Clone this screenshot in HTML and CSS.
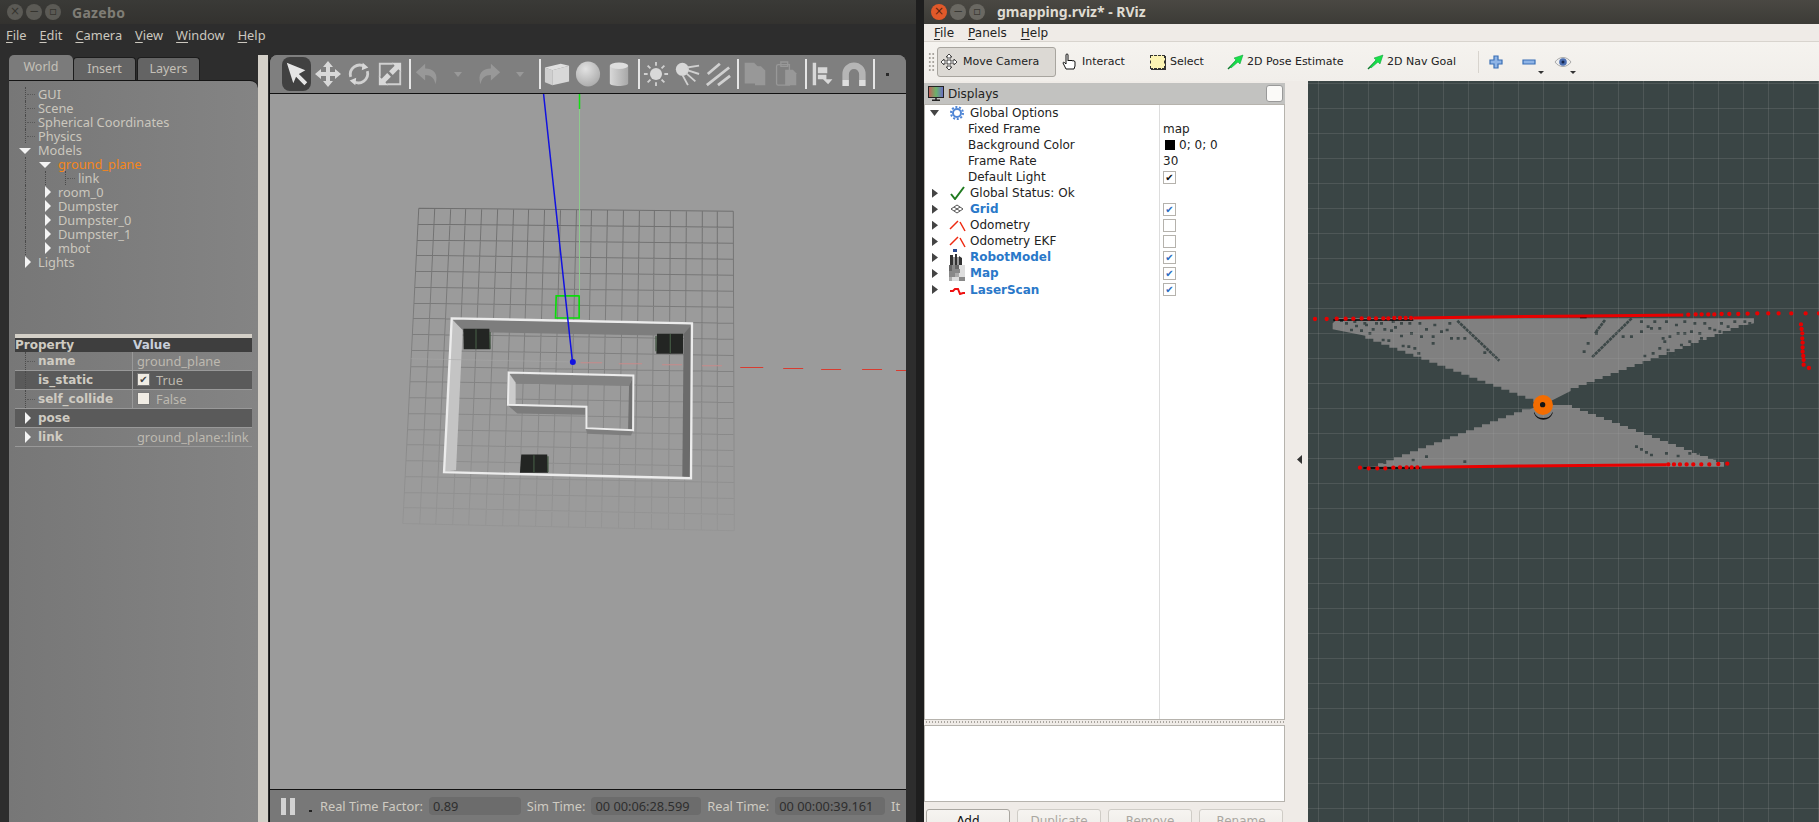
FILE: index.html
```html
<!DOCTYPE html>
<html lang="en">
<head>
<meta charset="utf-8">
<title>Gazebo and RViz</title>
<link rel="stylesheet" href="styles.css">
</head>
<body>
<div class="desktop">

<section class="gz">
  <header class="gz-title">
    <div class="wbtns">
      <span class="wbtn dim">×</span><span class="wbtn dim">−</span><span class="wbtn dim">▫</span>
    </div>
    <span class="gz-name">Gazebo</span>
  </header>
  <nav class="gz-menu">
    <span><u>F</u>ile</span><span><u>E</u>dit</span><span><u>C</u>amera</span><span><u>V</u>iew</span><span><u>W</u>indow</span><span><u>H</u>elp</span>
  </nav>
  <div class="gz-body">
    <aside class="gz-left">
      <div class="tabs">
        <div class="tab on">World</div>
        <div class="tab">Insert</div>
        <div class="tab">Layers</div>
      </div>
      <div class="gz-panel">
        <div class="gtree">
          <div class="g"><i class="tw"></i>GUI</div>
          <div class="g"><i class="tw"></i>Scene</div>
          <div class="g"><i class="tw"></i>Spherical Coordinates</div>
          <div class="g"><i class="tw"></i>Physics</div>
          <div class="g"><i class="down"></i>Models</div>
          <div class="g orange"><i class="ind"></i><i class="down"></i>ground_plane</div>
          <div class="g"><i class="ind"></i><i class="ind"></i><i class="tw"></i>link</div>
          <div class="g"><i class="ind"></i><i class="right"></i>room_0</div>
          <div class="g"><i class="ind"></i><i class="right"></i>Dumpster</div>
          <div class="g"><i class="ind"></i><i class="right"></i>Dumpster_0</div>
          <div class="g"><i class="ind"></i><i class="right"></i>Dumpster_1</div>
          <div class="g"><i class="ind"></i><i class="right"></i>mbot</div>
          <div class="g"><i class="right"></i>Lights</div>
        </div>
        <div class="ptable">
          <div class="phead"><span class="pc">Property</span><span>Value</span></div>
          <div class="prow"><span class="pc line"><i class="tw"></i>name</span><span class="pv">ground_plane</span></div>
          <div class="prow alt"><span class="pc line"><i class="tw"></i>is_static</span><span class="pv"><i class="gcheck on">✔</i>True</span></div>
          <div class="prow"><span class="pc line"><i class="tw"></i>self_collide</span><span class="pv"><i class="gcheck"></i>False</span></div>
          <div class="prow alt"><span class="pc"><i class="right"></i>pose</span></div>
          <div class="prow"><span class="pc"><i class="right"></i>link</span><span class="pv">ground_plane::link</span></div>
        </div>
      </div>
    </aside>
    <div class="split"></div>
    <main class="gz-main">
      <div class="gz-tools">
        <div class="tool sel"><svg width="26" height="28" viewBox="0 0 28 28"><path class="ic" d="M3 2l20 8-7 4 9 9-3 3-9-9-3 7z"/></svg></div>
        <div class="tool"><svg width="28" height="28" viewBox="0 0 28 28"><path class="ic" d="M14 1l5 6h-3v5h5V9l6 5-6 5v-3h-5v5h3l-5 6-5-6h3v-5H7v3l-6-5 6-5v3h5V7H9z"/></svg></div>
        <div class="tool"><svg width="26" height="28" viewBox="0 0 28 28"><path class="ln" d="M5 17a10 10 0 0 1 15-11M23 11a10 10 0 0 1-15 11"/><path class="ic" d="M18 2l6 5-7 3zM10 26l-6-5 7-3z"/></svg></div>
        <div class="tool"><svg width="26" height="28" viewBox="0 0 28 28"><path class="ln thin" d="M3 17V3h14M25 11v14H11"/><path class="ic" d="M26 2h-10l3 3-6 6 4 4 6-6 3 3zM2 26h10l-3-3 6-6-4-4-6 6-3-3z"/></svg></div>
        <i class="sep"></i>
        <div class="tool"><svg width="26" height="26" viewBox="0 0 28 28"><path class="off" d="M12 3L2 12l10 9v-6c6 0 10 3 11 10 4-11-2-17-11-17z"/></svg></div>
        <div class="tool"><i class="dd"></i></div>
        <div class="tool"><svg width="26" height="26" viewBox="0 0 28 28"><path class="off" d="M16 3l10 9-10 9v-6c-6 0-10 3-11 10-4-11 2-17 11-17z"/></svg></div>
        <div class="tool"><i class="dd"></i></div>
        <i class="sep"></i>
        <div class="tool"><svg width="26" height="28" viewBox="0 0 28 28"><path fill="#cfcfcf" d="M1 7l8 3v16l-8-3z"/><path fill="#d8d8d8" d="M9 10l18-5v17L9 26z"/><path fill="#e0e0e0" d="M1 7l17-4 9 2-18 5z"/></svg></div>
        <div class="tool"><svg width="26" height="28" viewBox="0 0 28 28"><defs><radialGradient id="sph" cx=".4" cy=".3" r=".8"><stop offset="0" stop-color="#e2e2e2"/><stop offset="1" stop-color="#a6a6a6"/></radialGradient></defs><ellipse cx="14" cy="14" rx="13" ry="13.5" fill="url(#sph)"/></svg></div>
        <div class="tool"><svg width="22" height="28" viewBox="0 0 24 28"><defs><linearGradient id="cyl" x1="0" x2="1"><stop offset="0" stop-color="#d8d8d8"/><stop offset="1" stop-color="#a8a8a8"/></linearGradient></defs><path fill="url(#cyl)" d="M2 5v19c0 4 20 4 20 0V5z"/><ellipse cx="12" cy="5" rx="10" ry="3.5" fill="#dedede"/></svg></div>
        <i class="sep"></i>
        <div class="tool"><svg width="26" height="26" viewBox="0 0 28 28"><circle class="ic" cx="14" cy="14" r="6.5"/><path class="ln thin" d="M14 1v4M14 23v4M1 14h4M23 14h4M5 5l3 3M20 20l3 3M23 5l-3 3M8 20l-3 3"/></svg></div>
        <div class="tool"><svg width="28" height="26" viewBox="0 0 30 28"><circle class="ic" cx="10" cy="9" r="7"/><path class="ln thin" d="M15 7l13-2M16 10l12 4M14 13l10 9M10 15l6 11"/></svg></div>
        <div class="tool"><svg width="26" height="26" viewBox="0 0 28 28"><path class="ln" d="M3 14L16 3M2 26L26 7M14 26L27 16"/></svg></div>
        <i class="sep"></i>
        <div class="tool"><svg width="24" height="26" viewBox="0 0 28 30"><path class="off" d="M2 2h11l5 5v19H2z"/><path class="off" d="M14 6h7l5 5v17H14z"/></svg></div>
        <div class="tool"><svg width="24" height="28" viewBox="0 0 28 30"><path class="offline" d="M5 4h13v24H5a2 2 0 0 1-2-2V6a2 2 0 0 1 2-2z"/><path class="offline" d="M8 1h8v5H8z"/><path class="off" d="M13 10h9l4 4v14H13z"/></svg></div>
        <i class="sep"></i>
        <div class="tool"><svg width="24" height="26" viewBox="0 0 28 28"><path class="ic" d="M2 1h4v26H2zM8 6h11v7H8zM8 15h10v5h7l-5 6-6-6H8z"/></svg></div>
        <div class="tool"><svg width="26" height="26" viewBox="0 0 28 28"><path fill="none" stroke="url(#mag)" stroke-width="7" d="M5 27V14a9 9 0 0 1 18 0v13"/><defs><linearGradient id="mag" x1="0" x2="0" y1="0" y2="1"><stop offset="0" stop-color="#b5b5b5"/><stop offset=".7" stop-color="#b5b5b5"/><stop offset=".72" stop-color="#dedede"/></linearGradient></defs></svg></div>
        <i class="sep"></i>
        <i class="tdot"></i>
      </div>
      <div class="scene">
        <svg class="fill" viewBox="269 95 637 694" preserveAspectRatio="none">
          <defs>
            <linearGradient id="gfade" gradientUnits="userSpaceOnUse" x1="0" x2="0" y1="209" y2="531"><stop offset="0" stop-color="#6f6f6f"/><stop offset="1" stop-color="#959595"/></linearGradient>
          </defs>
          <path fill="none" stroke="url(#gfade)" stroke-width="1" d="M418 209L402 524M434 209L419 524M450 209L435 525M465 209L452 525M481 210L468 525M497 210L485 526M513 210L502 526M528 210L518 526M544 210L535 527M560 210L551 527M576 210L568 527M591 211L585 528M607 211L601 528M623 211L618 529M639 211L634 529M654 211L651 529M670 211L668 530M686 212L684 530M702 212L701 530M717 212L717 531M733 212L734 531M418 209L733 212M417 225L733 228M416 241L733 244M416 256L733 260M415 272L733 276M414 288L733 292M413 304L733 308M412 319L733 324M412 335L733 340M411 351L733 356M410 367L733 372M409 382L733 387M408 398L733 403M408 414L733 419M407 430L733 435M406 445L733 451M405 461L733 467M404 477L734 483M404 493L734 499M403 508L734 515M402 524L734 531"/>
          <g transform="translate(390 290) scale(.3333)">
            <path fill="#7d7d7d" d="M186 90L905 105 880 140 218 128z"/>
            <path fill="#c4c4c4" d="M183 90L216 122 196 542 162 546z"/>
            <path fill="#6b6b6b" d="M905 105L880 135 876 562 902 565z"/>
            <path fill="none" stroke="#ececec" stroke-width="7" d="M183 87L905 102 902 566 160 548z"/>
            <g fill="#232523">
              <path d="M218 118h78l3 62h-80z"/><path d="M800 133h78v60h-80z"/><path d="M392 495h78l2 55h-84z"/>
            </g>
            <path stroke="#3f533f" stroke-width="4" fill="none" d="M256 120v58M840 134v58M430 497v52M298 128v50M797 140v46M472 500v48"/>
            <path fill="#828282" d="M358 254L727 262 716 290 378 282z"/>
            <path fill="#cbcbcb" d="M354 250L375 280 375 346 352 346z"/>
            <path fill="#707070" d="M728 262L716 290 713 418 728 422z"/>
            <path fill="#7c7c7c" d="M352 348L584 354 584 376 380 372z"/>
            <path fill="#7e7e7e" d="M586 418L728 424 722 438 590 433z"/>
            <path fill="none" stroke="#ececec" stroke-width="6" d="M354 249L729 258 728 422 588 416 588 352 352 346z"/>
            <path fill="none" stroke="#a8a8a8" stroke-width="1.5" d="M60 208L560 218"/>
            <path fill="none" stroke="#0bdc0b" stroke-width="5" d="M497 20h69v66h-71z"/>
            <circle cx="547" cy="218" r="9" fill="#1212e0"/>
            <path fill="none" stroke="#c78a8a" stroke-width="3" d="M570 220h65M685 223h70M815 226h60M935 229h60"/>
          </g>
          <path fill="none" stroke="#1212e0" stroke-width="1.500" d="M543 95L564 290 567 317 572 363"/>
          <path fill="none" stroke="#d83c30" stroke-width="1" d="M740 368h23M783 369h20M821 370h20M862 370h20M896 371h10"/>
          <path fill="none" stroke="#8ecb8e" stroke-width="1" d="M579 110V296"/>
          <path fill="none" stroke="#12dd12" stroke-width="1.500" d="M579 95v15"/>
        </svg>
      </div>
      <div class="gz-status">
        <i class="pause"></i><i class="pause"></i><i class="sdot"></i>
        <span class="slabel">Real Time Factor:</span><span class="sfield w90">0.89</span>
        <span class="slabel">Sim Time:</span><span class="sfield w110">00 00:06:28.599</span>
        <span class="slabel">Real Time:</span><span class="sfield w110">00 00:00:39.161</span>
        <span class="slabel">It</span>
      </div>
    </main>
  </div>
</section>

<section class="rv">
  <header class="rv-title">
    <div class="wbtns r">
      <span class="wbtn close">×</span><span class="wbtn rg">−</span><span class="wbtn rg">▫</span>
    </div>
    <span class="rv-name">gmapping.rviz* - RViz</span>
  </header>
  <nav class="rv-menu"><span><u>F</u>ile</span><span><u>P</u>anels</span><span><u>H</u>elp</span></nav>
  <div class="rv-tools">
    <i class="grip"></i>
    <div class="rbtn on"><svg width="18" height="18" viewBox="0 0 18 18"><path fill="#fff" stroke="#444" d="M9 1l3 3h-2v4h4V6l3 3-3 3v-2h-4v4h2l-3 3-3-3h2v-4H4v2L1 9l3-3v2h4V4H6z"/></svg>Move Camera</div>
    <div class="rbtn inter"><svg width="17" height="18" viewBox="0 0 17 18"><path fill="#fff" stroke="#111" d="M5 16L2 10c0-1 1-1 2 0l1 1V2c0-1.500 2-1.500 2 0v6l1-1 1 1 1-1 1 1 1-.5 2 1V13l-1 3z"/></svg>Interact</div>
    <div class="rbtn sel"><i class="selbox"></i>Select</div>
    <div class="rbtn pose"><svg width="17" height="16" viewBox="0 0 17 16"><path stroke="#0c7a2c" stroke-width="1.500" d="M1 15L10 6"/><path fill="#18e04a" stroke="#0c9a38" stroke-width=".5" d="M16 1l-3 9-2-2-7 6-1-1 6-7-2-2z"/></svg>2D Pose Estimate</div>
    <div class="rbtn nav"><svg width="17" height="16" viewBox="0 0 17 16"><path stroke="#0c7a2c" stroke-width="1.500" d="M1 15L10 6"/><path fill="#18e04a" stroke="#0c9a38" stroke-width=".5" d="M16 1l-3 9-2-2-7 6-1-1 6-7-2-2z"/></svg>2D Nav Goal</div>
    <i class="rsep"></i>
    <div class="ricon wide"><svg width="14" height="14" viewBox="0 0 14 14"><path fill="#8fb4e6" stroke="#3a6fb5" stroke-width="1.200" d="M5 1h4v4h4v4H9v4H5V9H1V5h4z"/></svg></div>
    <div class="ricon"><svg width="14" height="14" viewBox="0 0 14 14"><path fill="#8fb4e6" stroke="#3a6fb5" stroke-width="1.200" d="M1 5h12v4H1z"/></svg><i class="rdd"></i></div>
    <div class="ricon"><svg width="18" height="12" viewBox="0 0 18 12"><path fill="#eee" stroke="#aaa" d="M1 6c4-6 12-6 16 0-4 6-12 6-16 0z"/><circle cx="9" cy="6" r="3.800" fill="#4a6db0"/><circle cx="9" cy="6" r="1.500" fill="#17284f"/></svg><i class="rdd"></i></div>
  </div>
  <div class="rv-body">
    <aside class="dock">
      <div class="dock-main">
        <div class="d-head">
          <svg width="16" height="15" viewBox="0 0 16 15"><defs><linearGradient id="scr" x1="0" x2="1"><stop offset="0" stop-color="#c75a5a"/><stop offset=".5" stop-color="#6ab36a"/><stop offset="1" stop-color="#6a6ac9"/></linearGradient></defs><rect x=".5" y=".5" width="15" height="11" fill="url(#scr)" stroke="#222"/><path stroke="#222" stroke-width="1.500" d="M8 12v1.500M4 14.200h8"/></svg>
          <span>Displays</span><i class="d-close"></i>
        </div>
        <div class="d-tree">
          <div class="d"><i class="ar dn"></i><span class="di"><svg width="14" height="14" viewBox="0 0 14 14"><circle cx="7" cy="7" r="4" fill="none" stroke="#4f86d6" stroke-width="2"/><circle cx="7" cy="7" r="6" fill="none" stroke="#4f86d6" stroke-width="2" stroke-dasharray="2 1.700"/></svg></span><span class="dn-t">Global Options</span><span class="dv"></span></div>
          <div class="d sub"><span class="dn-t">Fixed Frame</span><span class="dv">map</span></div>
          <div class="d sub"><span class="dn-t">Background Color</span><span class="dv"><i class="swatch"></i>0; 0; 0</span></div>
          <div class="d sub"><span class="dn-t">Frame Rate</span><span class="dv">30</span></div>
          <div class="d sub"><span class="dn-t">Default Light</span><span class="dv"><i class="cb">✔</i></span></div>
          <div class="d"><i class="ar"></i><span class="di"><svg width="15" height="14" viewBox="0 0 15 14"><path fill="none" stroke="#1f7a1f" stroke-width="2" d="M1 8l4 5 9-12"/></svg></span><span class="dn-t">Global Status: Ok</span><span class="dv"></span></div>
          <div class="d"><i class="ar"></i><span class="di"><svg width="14" height="10" viewBox="0 0 14 10"><path fill="none" stroke="#555" d="M7 1l6 4-6 4-6-4zM4 3l6 4M10 3L4 7"/></svg></span><span class="dn-t b">Grid</span><span class="dv"><i class="cb bl">✔</i></span></div>
          <div class="d"><i class="ar"></i><span class="di"><svg width="17" height="13" viewBox="0 0 17 13"><path fill="none" stroke="#ee2a12" stroke-width="1.500" d="M1 10L9 2M11 3l5 9"/></svg></span><span class="dn-t">Odometry</span><span class="dv"><i class="cb"></i></span></div>
          <div class="d"><i class="ar"></i><span class="di"><svg width="17" height="13" viewBox="0 0 17 13"><path fill="none" stroke="#ee2a12" stroke-width="1.500" d="M1 10L9 2M11 3l5 9"/></svg></span><span class="dn-t">Odometry EKF</span><span class="dv"><i class="cb"></i></span></div>
          <div class="d"><i class="ar"></i><span class="di"><svg width="16" height="16" viewBox="0 0 16 16"><rect x="4" y="0" width="4" height="3" fill="#2a4a90"/><path fill="#333" d="M1 6h3v10H1zM6 5h2v11H6zM10 7l3 2v7h-3z"/><path fill="#999" d="M4 8h2v8H4zM8 8h2v8H8z"/></svg></span><span class="dn-t b">RobotModel</span><span class="dv"><i class="cb bl">✔</i></span></div>
          <div class="d"><i class="ar"></i><span class="di"><svg width="16" height="16" viewBox="0 0 16 16"><rect width="16" height="16" fill="#ddd"/><path fill="#666" d="M0 0h3v6H0zM6 0h4v4H6z"/><path fill="#888" d="M3 0h3v12H3zM0 6h3v6H0zM6 4h5v4H6zM10 12h6v4h-6z"/><path fill="#aaa" d="M6 8h4v4H6zM0 12h3v4H0z"/></svg></span><span class="dn-t b">Map</span><span class="dv"><i class="cb bl">✔</i></span></div>
          <div class="d"><i class="ar"></i><span class="di"><svg width="17" height="10" viewBox="0 0 17 10"><path fill="none" stroke="#ee1010" stroke-width="2" d="M1 6h3l2-2h3l2 5 3-1h2"/></svg></span><span class="dn-t b">LaserScan</span><span class="dv"><i class="cb bl">✔</i></span></div>
        </div>
        <div class="d-handle"></div>
        <div class="d-lower"></div>
        <div class="d-btns">
          <div class="dbtn act">Add</div><div class="dbtn">Duplicate</div><div class="dbtn">Remove</div><div class="dbtn">Rename</div>
        </div>
      </div>
      <div class="dock-split"><i class="la"></i></div>
    </aside>
    <div class="view3d">
      <svg class="fill" viewBox="1308 81 511 741" preserveAspectRatio="none">
        <defs>
          <pattern id="rgrid" patternUnits="userSpaceOnUse" x="1318" y="83" width="25" height="25">
            <path fill="none" stroke="#a8a8a8" stroke-opacity=".18" d="M.5 0v25M0 .5h25"/>
          </pattern>
        </defs>
        <g transform="translate(1300 290) scale(.3333)">
          <path fill="#808080" d="M98 100L115 85H1362V100L1340 105h-24v9h-24v9h-24v9h-24v9h-24v9h-24v9h-24v9h-24v9h-24v9h-24v9h-24v9h-24v9h-24v9h-24v9h-24v9h-24v9h-24v9h-24v9h-24v9h-24v9h-24v9h-24v9L729 345 700 335v-9h-24v-9h-24v-9h-24v-9h-24v-9h-24v-9h-24v-9h-24v-9h-24v-9h-24v-9h-24v-9h-24v-9h-24v-9h-24v-9h-24v-9h-24v-9h-24v-9h-24v-9h-24v-9h-24v-9h-24v-9h-24v-9L98 118z"/>
          <path fill="#808080" d="M690 358h-24v9h-24v9h-24v9h-24v9h-24v9h-24v9h-24v9h-24v9h-24v9h-24v9h-24v9h-24v9h-24v9h-24v9h-24v9h-24v9h-24v9h-24v9h-24v9L200 530H1272L1272 516h-24v-9h-24v-9h-24v-9h-24v-9h-24v-9h-24v-9h-24v-9h-24v-9h-24v-9h-24v-9h-24v-9h-24v-9h-24v-9h-24v-9h-24v-9h-24v-9h-24v-9h-24v-9h-24v-9L729 345z"/>
          <path fill="none" stroke="#3d4848" stroke-width="8" d="M120 92h9M150 120h9M165 108h9M180 122h9M195 105h9M205 130h9M215 118h9M240 100h9M245 150h9M262 152h9M270 122h9M282 112h9M300 100h9M305 168h9M322 170h9M340 175h9M352 190h9M360 140h9M375 118h9M395 160h9M400 105h9M420 125h9M437 120h9M450 145h9M470 145h9M490 145h9M445 100h9M550 188h9M395 140h9M330 130h9M300 138h9M250 118h9M190 100h9M225 100h9M160 95h9M135 100h9M275 95h9M325 100h9M355 100h9M1020 95h9M1040 110h9M1060 95h9M1075 115h9M1095 95h9M1085 145h9M1105 140h9M1130 130h9M1150 130h9M1170 125h9M1195 130h9M1210 100h9M1225 115h9M1240 120h9M1260 100h9M1280 110h9M1300 95h9M1330 95h9M1345 100h9M1180 100h9M1150 95h9M1125 105h9M1100 180h9M1075 175h9M1055 190h9M1030 198h9M1140 165h9M1165 155h9M1090 155h9M860 160h9M848 185h9M885 130h9M965 140h9M990 140h9M1020 125h9M1050 115h9M1255 125h9M1200 145h9M1120 195h9M1005 470h9M1020 478h9M1035 487h9M1050 495h9M1095 490h9M1130 498h9M1165 490h9M1190 490h9M1240 505h9M375 500h9M490 515h9M250 518h9M335 510h9"/>
          <path fill="none" stroke="#3d4848" stroke-width="8" stroke-dasharray="10 2" d="M472 92L598 212M995 85L876 202M915 90L885 130"/>
        </g>
        <rect x="1308" y="81" width="511" height="741" fill="url(#rgrid)"/>
        <g transform="translate(1300 290) scale(.3333)">
          <path fill="none" stroke="#000" stroke-width="5" d="M100 90H340M840 82h20M190 534H360"/>
          <path fill="none" stroke="#e80000" stroke-width="13" stroke-linecap="round" d="M45 87h0M80 87h0M110 86h0M137 86h0M160 86h0M185 85h0M207 85h0M228 85h0M250 85h0M265 85h0M283 84h0M300 84h0M317 84h0M333 84h0M1165 74h0M1187 73h0M1205 73h0M1225 73h0M1243 73h0M1265 72h0M1288 72h0M1315 72h0M1343 71h0M1372 70h0M1405 70h0M1436 70h0M1474 70h0M1517 70h0M1557 70h0M1503 103h0M1505 117h0M1507 130h0M1507 145h0M1508 158h0M1508 172h0M1508 185h0M1510 198h0M1511 210h0M1511 224h0M1527 234h0M180 533h0M206 535h0M232 535h0M256 535h0M280 533h0M300 532h0M320 532h0M335 532h0M352 532h0M1105 523h0M1122 523h0M1140 523h0M1160 523h0M1180 523h0M1204 523h0M1228 523h0M1255 522h0M1282 521h0"/>
          <path fill="none" stroke="#e80000" stroke-width="9" d="M340 84L620 80 860 78 1150 75M365 532L660 528 1100 524"/>
          <path fill="#111" d="M702 365a30 30 0 0 0 56 0v5a30 30 0 0 1-56 0z"/>
          <circle cx="729" cy="345" r="30" fill="#f36c00"/>
          <circle cx="728" cy="344" r="8" fill="#141414"/>
        </g>
      </svg>
    </div>
  </div>
</section>
</div>
</body>
</html>
```

FILE: styles.css
```css
* { box-sizing: border-box; }
html, body { margin: 0; padding: 0; height: 100%; overflow: hidden; background: #1e1e1e; }
i { font-style: normal; display: block; flex: none; }
u { text-decoration: underline; text-underline-offset: 2px; }
.fill { display: block; width: 100%; height: 100%; }
.desktop { display: flex; width: 1819px; height: 822px; overflow: hidden; }

/* Gazebo */
.gz { width: 916px; height: 822px; flex: none; display: flex; flex-direction: column; background: #2d2d2d; font-family: "Noto Sans", sans-serif; font-size: 12.8px; color: #cbc7be; }
.gz-title { height: 24px; flex: none; display: flex; align-items: center; background: linear-gradient(#3a3a37, #33322f); }
.wbtns { display: flex; gap: 3px; padding-left: 7px; width: 72px; }
.wbtn { width: 16px; height: 16px; border-radius: 50%; font: 12px/15px "DejaVu Sans", sans-serif; text-align: center; }
.wbtn.dim { background: #5b5a55; color: #35342f; }
.gz-name { font-weight: 700; font-size: 14px; color: #7f7d76; letter-spacing: .3px; }
.gz-menu { height: 31px; flex: none; display: flex; align-items: flex-start; gap: 13px; padding: 3px 0 0 6px; line-height: 16px; font-size: 12.8px; }
.gz-body { flex: 1; display: flex; min-height: 0; }
.gz-left { width: 258px; flex: none; padding-left: 9px; display: flex; flex-direction: column; }
.tabs { display: flex; height: 25px; flex: none; align-items: flex-end; }
.tab { width: 63px; height: 23px; margin-right: 1px; background: #646464; border: 1px solid #1c1c1c; border-bottom: 0; border-radius: 4px 4px 0 0; text-align: center; line-height: 22px; color: #c4c0b8; font-size: 12.5px; box-shadow: 0 1px 0 #111; }
.tab.on { width: 64px; height: 25px; margin-right: 0; background: #7b7b7b; border: 0; border-radius: 5px 5px 0 0; line-height: 24px; box-shadow: none; position: relative; z-index: 1; }
.gz-panel { flex: 1; background: linear-gradient(90deg, #777, #848484); border-radius: 0 8px 0 0; border-top: 1px solid #151515; padding-top: 5.5px; }
.gtree { height: 182px; }
.g { height: 14px; line-height: 14px; display: flex; padding-left: 16px; }
.g.orange { color: #f5861a; }
.ind { width: 20px; height: 14px; border-left: 1px dotted #4a4a4a; }
.tw { width: 13px; height: 14px; border-left: 1px dotted #4a4a4a; position: relative; }
.tw::after { content: ""; position: absolute; left: 1px; top: 7px; width: 8px; border-top: 1px dotted #5a5a5a; }
.down { width: 0; height: 0; border-left: 6px solid transparent; border-right: 6px solid transparent; border-top: 6px solid #f4f4f4; margin: 5px 7px 0 -6px; }
.right { width: 0; height: 0; border-top: 6px solid transparent; border-bottom: 6px solid transparent; border-left: 6px solid #f4f4f4; margin: 1px 7px 0 0; }
.ptable { margin: 65px 6px 0 6px; border-top: 4px solid #d4d0c8; font-size: 12.8px; }
.phead { height: 14px; background: #3e3e3e; display: flex; font-weight: 700; color: #c9d0da; line-height: 14px; font-family: "DejaVu Sans", sans-serif; font-size: 12px; }
.phead .pc { width: 118px; padding: 0; }
.prow { height: 19px; display: flex; border-bottom: 1px solid #999; line-height: 18px; }
.prow.alt { background: #5a5a5a; }
.pc { width: 118px; flex: none; display: flex; padding-left: 10px; font-weight: 700; font-family: "DejaVu Sans", sans-serif; font-size: 12px; color: #cfcbc2; }
.pc .tw { height: 18px; }
.pc .tw::after { top: 9px; }
.pc .right { margin-top: 3px; }
.pc.line { border-right: 1px solid #999; }
.pv { padding-left: 4px; display: flex; color: #bdb9b0; }
.gcheck { width: 13px; height: 13px; margin: 2px 6px 0 0; background: #f0ece4; border: 1px solid #777; color: #444; font: 10px/11px "DejaVu Sans", sans-serif; text-align: center; }
.split { width: 10px; flex: none; background: #d4d0c8; }
.gz-main { width: 637px; flex: none; margin-left: 1px; border-left: 1px solid #111; border-radius: 8px 8px 0 0; background: #7d7d7d; display: flex; flex-direction: column; overflow: hidden; }
.gz-tools { height: 39px; flex: none; display: flex; align-items: center; padding-left: 12px; border-bottom: 1px solid #111; background: #7f7f7f; }
.tool { width: 31px; height: 34px; flex: none; display: flex; align-items: center; justify-content: center; }
.tool.sel { width: 29px; margin-right: 1px; background: #414141; border-radius: 8px; }
.ic { fill: #d8d8d8; }
.tool.sel .ic { fill: #e6e6e6; }
.ln { fill: none; stroke: #d0d0d0; stroke-width: 3; }
.ln.thin { stroke-width: 2; }
.off { fill: #989898; }
.offline { fill: none; stroke: #989898; stroke-width: 1.500; }
.dd { width: 0; height: 0; border-left: 4px solid transparent; border-right: 4px solid transparent; border-top: 5px solid #999; }
.sep { width: 2px; height: 30px; background: #e6e6e6; margin-left: 4px; }
.tdot { width: 3px; height: 3px; background: #2a2a2a; margin-left: 11px; }
.scene { flex: 1; background: #9b9b9b; min-height: 0; }
.gz-status { height: 33px; flex: none; border-top: 1px solid #111; background: #787878; display: flex; align-items: center; padding-left: 11px; font-size: 12.8px; overflow: hidden; white-space: nowrap; }
.pause { width: 5px; height: 17px; background: #d2d2d2; margin-right: 4px; }
.sdot { width: 3px; height: 2px; background: #222; margin: 10px 8px 0 10px; }
.slabel { color: #cfcbc2; margin-right: 6px; }
.sfield { height: 18px; border-radius: 4px; background: #6c6c6c; color: #2e2e2e; padding: 0 4px; line-height: 18px; margin-right: 6px; }
.w90 { width: 92px; }
.w110 { width: 110px; }

/* RViz */
.rv { width: 895px; height: 822px; flex: none; margin-left: 8px; display: flex; flex-direction: column; background: #efebe7; font-family: "DejaVu Sans", sans-serif; font-size: 12px; color: #222; }
.rv-title { height: 24px; flex: none; display: flex; align-items: center; background: linear-gradient(#4a4843, #3c3b37); padding-bottom: 1px; }
.wbtns.r { padding-left: 7px; width: 73px; }
.wbtn.close { background: #e0592a; color: #5a2410; }
.wbtn.rg { background: #6a6862; color: #3a3934; }
.rv-name { font: 700 14px "Noto Sans", sans-serif; color: #dfdbd2; }
.rv-menu { height: 18px; flex: none; display: flex; gap: 14px; padding-left: 10px; line-height: 18px; background: #efebe7; border-bottom: 1px solid #d8d4ce; }
.rv-tools { height: 39px; flex: none; display: flex; align-items: center; background: linear-gradient(#f5f3ef, #f1eeea); font-size: 11px; padding-left: 4px; }
.grip { width: 7px; height: 20px; margin-right: 2px; background: radial-gradient(circle, #a8a49e 1px, transparent 1px) 0 0 / 3.500px 4px; }
.rbtn { display: flex; align-items: center; gap: 3px; height: 30px; flex: none; white-space: nowrap; }
.rbtn.on { width: 119px; padding-left: 2px; gap: 5px; background: #dcd9d4; border: 1px solid #a8a59f; border-radius: 3px; }
.rbtn.inter { width: 94px; padding-left: 5px; gap: 4px; }
.rbtn.sel { width: 77px; gap: 5px; }
.rbtn.pose { width: 140px; }
.rbtn.nav { width: 111px; }
.selbox { width: 15px; height: 14px; background: #fcf4b4; border: 1px dashed #333; box-shadow: 1px 1px 0 #333; }
.rsep { width: 1px; height: 22px; background: #d8d4ce; margin-right: 10px; }
.ricon { width: 32px; height: 24px; flex: none; display: flex; align-items: center; position: relative; }
.ricon.wide { width: 33px; }
.rdd { position: absolute; right: 10px; bottom: 0; width: 0; height: 0; border-left: 3px solid transparent; border-right: 3px solid transparent; border-top: 3px solid #333; }
.rv-body { flex: 1; display: flex; min-height: 0; }
.dock { width: 384px; flex: none; display: flex; }
.dock-main { width: 361px; flex: none; padding-top: 2px; display: flex; flex-direction: column; }
.d-head { height: 21px; flex: none; display: flex; align-items: center; gap: 4px; padding-left: 4px; background: #c2c2c0; font-size: 12px; position: relative; }
.d-close { width: 17px; height: 17px; margin-left: auto; margin-right: 2px; background: #fbfaf8; border: 1px solid #999; border-radius: 3px; }
.d-tree { height: 616px; flex: none; background: #fff linear-gradient(#ddd, #ddd) 234px 0 / 1px 100% no-repeat; border: 1px solid #b6b3ad; }
.d { height: 16.050px; display: flex; align-items: center; padding-left: 7px; line-height: 16px; }
.d.sub { padding-left: 0; }
.d.sub .dn-t { width: 235px; padding-left: 43px; }
.ar { width: 6px; height: 9px; background: #444; clip-path: polygon(0 0, 100% 50%, 0 100%); margin-right: 9px; }
.ar.dn { width: 9px; height: 6px; clip-path: polygon(0 0, 100% 0, 50% 100%); margin: 0 8px 0 -2px; }
.di { width: 20px; flex: none; display: flex; justify-content: center; margin-right: 3px; }
.dn-t { width: 190px; flex: none; white-space: nowrap; }
.dn-t.b { font-weight: 700; color: #2a78c9; }
.dv { padding-left: 3px; display: flex; align-items: center; }
.cb { width: 13px; height: 13px; border: 1px solid #b5b2ac; background: #fff; font: 10px/11px "DejaVu Sans", sans-serif; text-align: center; color: #111; }
.cb.bl { color: #2a6cc0; }
.swatch { width: 10px; height: 10px; background: #000; margin: 0 4px 0 2px; }
.d-handle { height: 5px; flex: none; background: radial-gradient(circle, #a9a59f .7px, transparent .8px) 166px 0 / 3px 4px repeat-x; }
.d-lower { height: 77px; flex: none; background: #fff; border: 1px solid #b6b3ad; }
.d-btns { display: flex; gap: 7px; padding: 7px 0 0 2px; }
.dbtn { width: 84px; height: 30px; flex: none; background: linear-gradient(#f6f4f1, #ece9e4); border: 1px solid #cfccc6; border-radius: 3px; text-align: center; line-height: 22px; color: #aaa7a1; }
.dbtn.act { border-color: #a9a6a0; color: #111; }
.dock-split { width: 23px; flex: none; position: relative; display: flex; align-items: center; justify-content: center; padding: 16px 0 0 6px; }
.la { width: 5px; height: 9px; background: #333; clip-path: polygon(100% 0, 0 50%, 100% 100%); }
.view3d { flex: 1; background: #3a4545; min-width: 0; }
```
